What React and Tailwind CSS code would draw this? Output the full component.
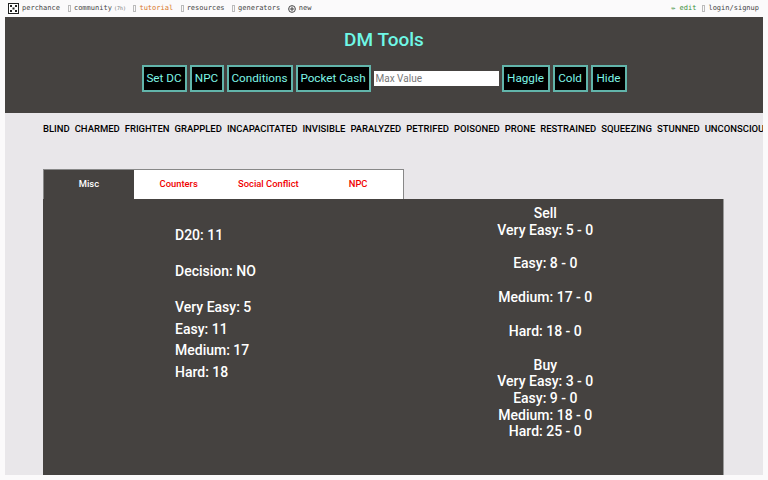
const leftLinks = [
  { label: "community", note: "(7h)" },
  { label: "tutorial", color: "text-[#d9772b]" },
  { label: "resources" },
  { label: "generators" },
];

const topButtons = [
  { label: "Set DC", width: "w-[45px]" },
  { label: "NPC", width: "w-[34px]" },
  { label: "Conditions", width: "w-[66px]" },
  { label: "Pocket Cash", width: "w-[75px]" },
];
const moreButtons = [
  { label: "Haggle", width: "w-[48px]" },
  { label: "Cold", width: "w-[35px]" },
  { label: "Hide", width: "w-[36px]" },
];
const conditions = [
  "BLIND",
  "CHARMED",
  "FRIGHTEN",
  "GRAPPLED",
  "INCAPACITATED",
  "INVISIBLE",
  "PARALYZED",
  "PETRIFED",
  "POISONED",
  "PRONE",
  "RESTRAINED",
  "SQUEEZING",
  "STUNNED",
  "UNCONSCIOUS",
];
const tabs = ["Misc", "Counters", "Social Conflict", "NPC"];

const Missing = () => (
  <span className="inline-block w-[3px] h-[7px] border border-[#bbb] mr-[3px]" />
);

const ToolButton = ({ label, width }) => (
  <button className={`h-[27px] ${width} bg-black border-2 border-[#62b5ab] text-[#7ff5e6] text-[11.7px] leading-none whitespace-nowrap`}>
    {label}
  </button>
);

export default function App() {
  return (
    <div className="w-[768px] h-[480px] overflow-hidden bg-[#fbfafb] font-['Roboto',sans-serif]">
      {/* perchance bar */}
      <div className="h-[17px] flex items-center justify-between pl-[8px] pr-[9px] font-['DejaVu_Sans_Mono',monospace] text-[7px] text-[#444]">
        <div className="flex items-center">
          <svg width="11" height="11" viewBox="0 0 11 11" className="mr-[3px]">
            <rect x="0.5" y="0.5" width="10" height="10" fill="#fff" stroke="#222" />
            <rect x="2" y="2" width="2" height="2" fill="#222" />
            <rect x="7" y="2" width="2" height="2" fill="#222" />
            <rect x="4.5" y="4.5" width="2" height="2" fill="#222" />
            <rect x="2" y="7" width="2" height="2" fill="#222" />
            <rect x="7" y="7" width="2" height="2" fill="#222" />
          </svg>
          <span className="mr-[8px]">perchance</span>
          {leftLinks.map((link) => (
            <span key={link.label} className={`flex items-center mr-[7.5px] ${link.color || ""}`}>
              <Missing />
              {link.label}
              {link.note && <span className="ml-[2px] text-[5px] text-[#777]">{link.note}</span>}
            </span>
          ))}
          <svg width="8" height="8" viewBox="0 0 9 9" className="mr-[3px]" fill="none" stroke="#333">
            <circle cx="4.5" cy="4.5" r="3.8" />
            <path d="M4.5 2v5M2 4.5h5" />
          </svg>
          <span>new</span>
        </div>
        <div className="flex items-center">
          <span className="text-[#3d8f3d] mr-[6px]">✏ edit</span>
          <Missing />
          <span>login/signup</span>
        </div>
      </div>

      {/* generator frame */}
      <div className="ml-[5px] w-[758px] h-[458px] overflow-hidden bg-[#e9e7ea]">
        <div className="h-[96px] bg-[#454240] flex flex-col items-center">
          <h1 className="mt-[11px] h-[24px] leading-[24px] text-[19px] font-medium text-[#6ff7e6]">DM Tools</h1>
          <div className="mt-[13px] flex items-center gap-[3px]">
            {topButtons.map((b) => (
              <ToolButton key={b.label} label={b.label} width={b.width} />
            ))}
            <input
              placeholder="Max Value"
              className="w-[125px] h-[15px] bg-white px-[2px] text-[10px] placeholder:text-[#777] outline-none"
            />
            {moreButtons.map((b) => (
              <ToolButton key={b.label} label={b.label} width={b.width} />
            ))}
          </div>
        </div>

        <div className="mt-[9px] pl-[38px] flex gap-[5px] whitespace-nowrap text-[9.47px] font-medium leading-[13px] text-black">
          {conditions.map((c) => (
            <span key={c}>{c}</span>
          ))}
        </div>

        <div className="mt-[34px] ml-[38px] w-[361px] h-[30px] flex bg-white border border-b-0 border-[#888]">
          {tabs.map((tab, i) => (
            <div
              key={tab}
              className={`w-[90px] flex items-center justify-center text-[9.4px] font-medium ${
                i === 0 ? "bg-[#454240] text-white" : "text-[#f00000]"
              }`}
            >
              {tab}
            </div>
          ))}
        </div>

        <div className="ml-[38px] w-[681px] h-[276px] bg-[#454240] border-r border-[#999] flex text-white text-[14px] font-medium">
          <div className="w-[325px] pl-[132px] pt-[27px]">
            <p className="leading-[18px]">D20: 11</p>
            <p className="mt-[18px] leading-[18px]">Decision: NO</p>
            <div className="mt-[18px] flex flex-col gap-[3.5px]">
              <p className="leading-[18px]">Very Easy: 5</p>
              <p className="leading-[18px]">Easy: 11</p>
              <p className="leading-[18px]">Medium: 17</p>
              <p className="leading-[18px]">Hard: 18</p>
            </div>
          </div>
          <div className="w-[356px] pt-[6px] text-center leading-[16.7px]">
            <p>Sell</p>
            <p>Very Easy: 5 - 0</p>
            <p className="mt-[17px]">Easy: 8 - 0</p>
            <p className="mt-[17px]">Medium: 17 - 0</p>
            <p className="mt-[17px]">Hard: 18 - 0</p>
            <p className="mt-[17px]">Buy</p>
            <p>Very Easy: 3 - 0</p>
            <p>Easy: 9 - 0</p>
            <p>Medium: 18 - 0</p>
            <p>Hard: 25 - 0</p>
          </div>
        </div>
      </div>
    </div>
  );
}
